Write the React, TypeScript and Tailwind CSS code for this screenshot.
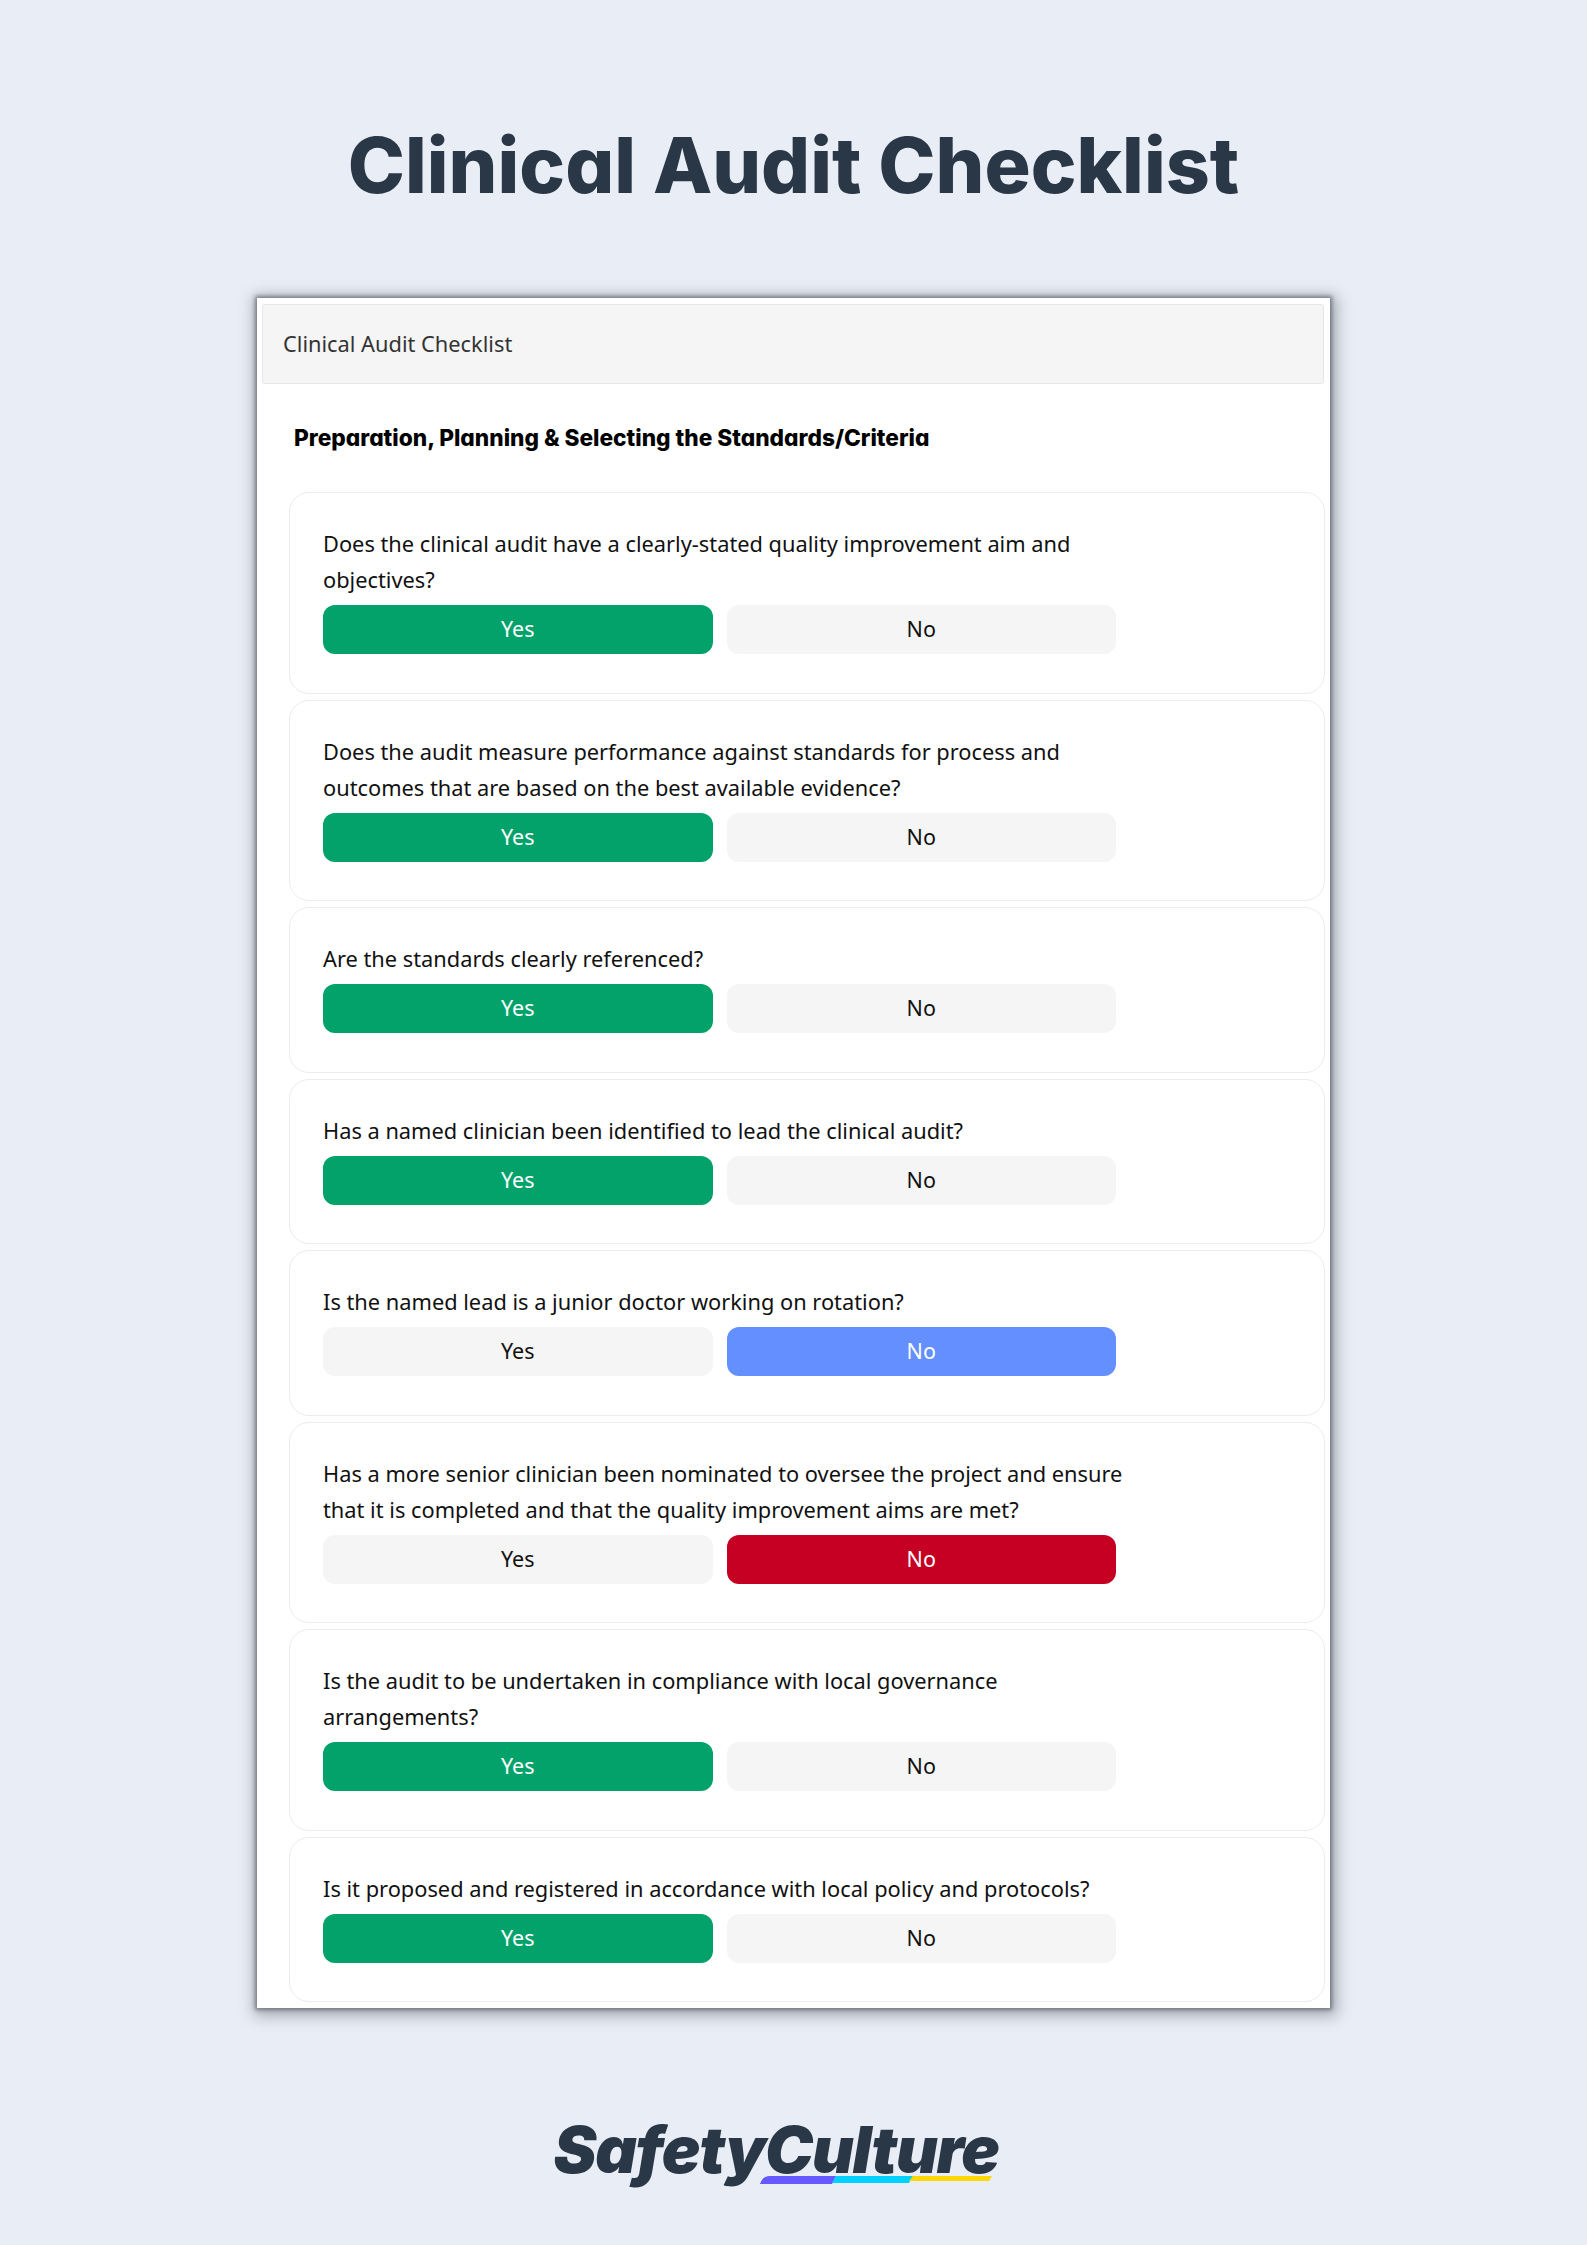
import React from "react";

const questions = [
  { text: "Does the clinical audit have a clearly-stated quality improvement aim and objectives?", answer: "yes" },
  { text: "Does the audit measure performance against standards for process and outcomes that are based on the best available evidence?", answer: "yes" },
  { text: "Are the standards clearly referenced?", answer: "yes" },
  { text: "Has a named clinician been identified to lead the clinical audit?", answer: "yes" },
  { text: "Is the named lead is a junior doctor working on rotation?", answer: "blue" },
  { text: "Has a more senior clinician been nominated to oversee the project and ensure that it is completed and that the quality improvement aims are met?", answer: "red" },
  { text: "Is the audit to be undertaken in compliance with local governance arrangements?", answer: "yes" },
  { text: "Is it proposed and registered in accordance with local policy and protocols?", answer: "yes" },
];

function Question({ text, answer }: { text: string; answer: string }) {
  const yesClass = answer === "yes" ? "bg-[#03a26a] text-white" : "bg-[#f5f5f5] text-[#111]";
  let noClass = "bg-[#f5f5f5] text-[#111]";
  if (answer === "blue") noClass = "bg-[#6490ff] text-white";
  if (answer === "red") noClass = "bg-[#c60022] text-white";

  return (
    <div className="ml-[32px] mr-[5px] rounded-[20px] border-[1.5px] border-[#ececec] pl-[33px] pt-[33px] pb-[38.5px]">
      <p className="w-[815px] text-[21.8px] leading-[36px] text-[#111]">{text}</p>
      <div className="mt-[7px] flex gap-[14px] text-[21.5px]">
        <div className={`flex h-[49px] w-[389.5px] items-center justify-center rounded-[12px] ${yesClass}`}>Yes</div>
        <div className={`flex h-[49px] w-[389.5px] items-center justify-center rounded-[12px] ${noClass}`}>No</div>
      </div>
    </div>
  );
}

export default function App() {
  return (
    <div className="flex min-h-[2245px] flex-col items-center bg-[#e9eef6] font-['Noto_Sans',sans-serif]">
      <h1 className="mt-[118px] font-['Inter',sans-serif] text-[77px] leading-[94px] font-extrabold text-[#293747] [font-feature-settings:'cv11']">
        Clinical Audit Checklist
      </h1>

      <div className="mt-[86px] w-[1073px] bg-white pt-[6px] pb-[6px] shadow-[0_0_4px_2px_rgba(70,75,85,0.6),2px_3px_14px_5px_rgba(70,75,85,0.4)]">
        <div className="ml-[5px] mr-[6px] flex h-[80px] items-center rounded-[3px] border border-[#e6e6e6] bg-[#f5f5f5] pl-[20px] text-[21.8px] text-[#333]">
          Clinical Audit Checklist
        </div>
        <h2 className="mt-[38px] mb-[38px] ml-[37px] font-['Inter',sans-serif] text-[22.7px] leading-[32px] font-extrabold text-black [font-feature-settings:'cv11']">
          Preparation, Planning &amp; Selecting the Standards/Criteria
        </h2>
        <div className="flex flex-col gap-[6px]">
          {questions.map((q) => (
            <Question key={q.text} text={q.text} answer={q.answer} />
          ))}
        </div>
      </div>

      <div className="relative mt-[102px] mr-[30px] h-[80px] w-[450px]">
        <div className="font-['Inter',sans-serif] text-[64.5px] leading-[80px] font-black tracking-[-0.02em] text-[#293747] italic [font-feature-settings:'cv11']">
          SafetyCulture
        </div>
        <svg className="absolute top-[64px] left-[206px]" width="240" height="12" viewBox="0 0 240 12">
          <path d="M0 10 Q2 2 10 2 H76 L72 10 Z" fill="#6559ff" />
          <path d="M76 2 H153 L149 9 H72 Z" fill="#00d1ff" />
          <path d="M153 2 H232 L229 7 H149 Z" fill="#ffd700" />
        </svg>
      </div>
    </div>
  );
}
